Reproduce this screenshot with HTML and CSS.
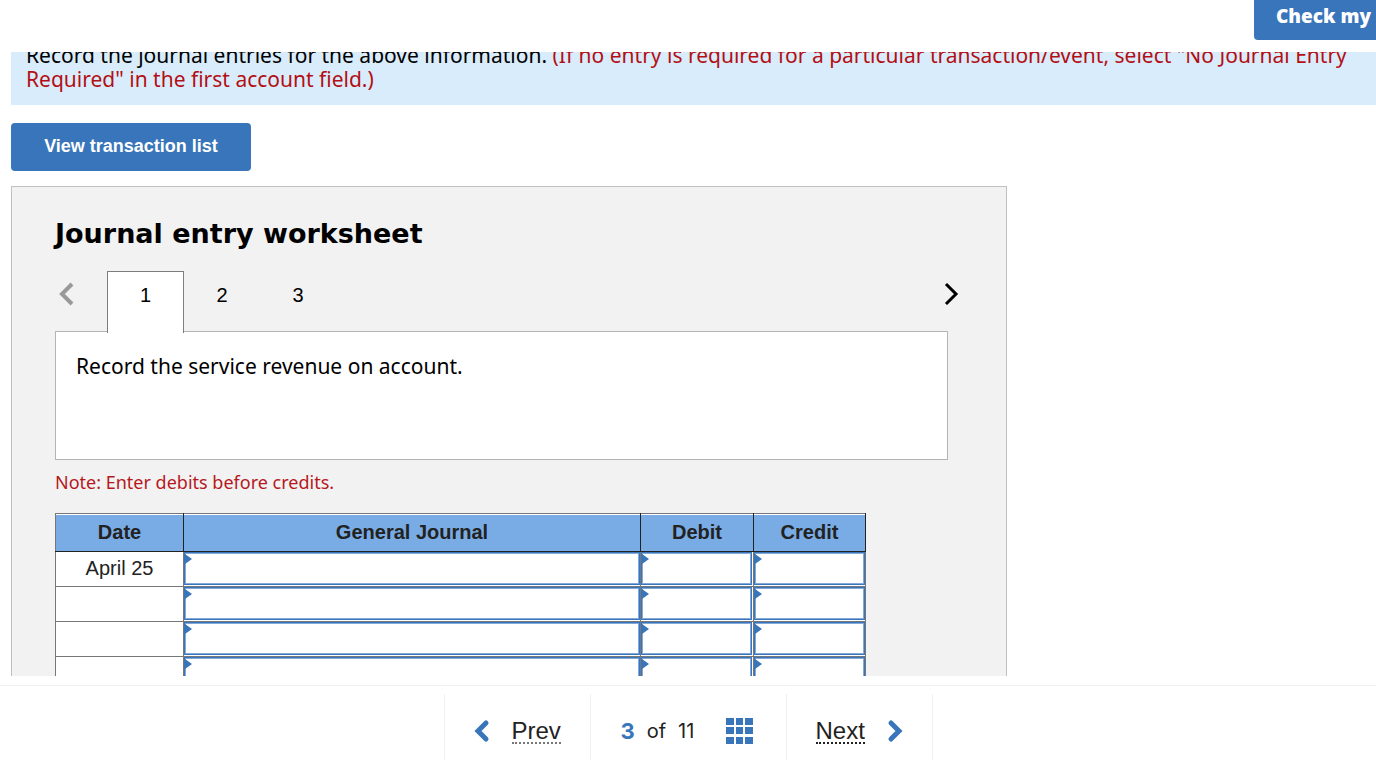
FILE: index.html
```html
<!DOCTYPE html>
<html lang="en">
<head>
    <meta charset="utf-8">
    <title>Journal entry worksheet</title>
    <link rel="stylesheet" href="styles.css">
</head>
<body>
    <header class="top-bar">
        <button type="button" class="check-button">Check my</button>
    </header>

    <main class="question">
        <p class="instructions">
            Record the journal entries for the above information.
            <span>(If no entry is required for a particular transaction/event, select "No Journal Entry Required" in the first account field.)</span>
        </p>
        <button type="button" class="list-button">View transaction list</button>

        <section class="worksheet">
            <h1>Journal entry worksheet</h1>
            <div class="tabs">
                <button type="button" class="arrow" aria-label="Previous entry" disabled>
                    <svg width="24" height="24" viewBox="0 0 24 24"><path d="M17 2 L7 12 L17 22"/></svg>
                </button>
                <button type="button" class="tab active">1</button>
                <button type="button" class="tab">2</button>
                <button type="button" class="tab">3</button>
                <button type="button" class="arrow next" aria-label="Next entry">
                    <svg width="24" height="24" viewBox="0 0 24 24"><path d="M10 2 L20 12 L10 22"/></svg>
                </button>
            </div>
            <div class="description">Record the service revenue on account.</div>
            <p class="note">Note: Enter debits before credits.</p>

            <table class="journal">
                <thead>
                    <tr>
                        <th class="date">Date</th>
                        <th>General Journal</th>
                        <th class="debit">Debit</th>
                        <th class="credit">Credit</th>
                    </tr>
                </thead>
                <tbody>
                    <tr>
                        <td>April 25</td>
                        <td class="entry"><input type="text" aria-label="Account 1"></td>
                        <td class="entry"><input type="text" aria-label="Debit 1"></td>
                        <td class="entry"><input type="text" aria-label="Credit 1"></td>
                    </tr>
                    <tr>
                        <td></td>
                        <td class="entry"><input type="text" aria-label="Account 2"></td>
                        <td class="entry"><input type="text" aria-label="Debit 2"></td>
                        <td class="entry"><input type="text" aria-label="Credit 2"></td>
                    </tr>
                    <tr>
                        <td></td>
                        <td class="entry"><input type="text" aria-label="Account 3"></td>
                        <td class="entry"><input type="text" aria-label="Debit 3"></td>
                        <td class="entry"><input type="text" aria-label="Credit 3"></td>
                    </tr>
                    <tr>
                        <td></td>
                        <td class="entry"><input type="text" aria-label="Account 4"></td>
                        <td class="entry"><input type="text" aria-label="Debit 4"></td>
                        <td class="entry"><input type="text" aria-label="Credit 4"></td>
                    </tr>
                </tbody>
            </table>
        </section>
    </main>

    <footer class="pager">
        <a href="#prev" class="step prev">
            <svg width="16" height="24" viewBox="0 0 16 24"><path d="M12 4 L4 12 L12 20"/></svg>
            <span>Prev</span>
        </a>
        <div class="position">
            <b>3</b>
            <span>of</span>
            <span class="total">11</span>
            <button type="button" class="grid-button" aria-label="All questions">
                <svg width="27" height="26" viewBox="0 0 27 26">
                    <path d="M0 0h8v7h-8z M10 0h7v7h-7z M19 0h8v7h-8z M0 9h8v7h-8z M10 9h7v7h-7z M19 9h8v7h-8z M0 19h8v7h-8z M10 19h7v7h-7z M19 19h8v7h-8z"/>
                </svg>
            </button>
        </div>
        <a href="#next" class="step next">
            <span>Next</span>
            <svg width="16" height="24" viewBox="0 0 16 24"><path d="M4 4 L12 12 L4 20"/></svg>
        </a>
    </footer>
</body>
</html>
```

FILE: styles.css
```css
* {
    box-sizing: border-box;
}
body {
    margin: 0;
    height: 100vh;
    display: flex;
    flex-direction: column;
    overflow: hidden;
    background: #fff;
    color: #000;
    font-family: "Noto Sans", Verdana, sans-serif;
    font-size: 21px;
}
button {
    border: none;
    padding: 0;
    background: none;
    cursor: pointer;
}

/* top bar */
.top-bar {
    display: flex;
    flex: none;
    justify-content: flex-end;
    height: 52px;
}
.check-button {
    height: 40px;
    padding: 0 5px 8px 22px;
    border-radius: 0 0 0 4px;
    background: #3975ba;
    color: #fff;
    font: 800 19px "Open Sans", sans-serif;
    white-space: nowrap;
}

/* question */
.question {
    flex: 1;
    min-height: 0;
    overflow: hidden;
    padding-left: 11px;
}
.instructions {
    margin: -23px 0 18px;
    padding: 14px 15px;
    background: #d9ecfb;
    line-height: 24px;
}
.instructions span {
    color: #b30f14;
}
.list-button {
    display: block;
    width: 240px;
    height: 48px;
    padding-bottom: 2px;
    border-radius: 4px;
    background: #3975ba;
    color: #fff;
    font: bold 18px "Liberation Sans", Arial, sans-serif;
}
.worksheet {
    max-width: 996px;
    margin-top: 15px;
    padding: 30px 46px 30px 43px;
    border: 1px solid #c0c0c0;
    background: #f2f2f2;
}
.worksheet h1 {
    margin: 0 0 20px;
    font-family: Verdana, "DejaVu Sans", sans-serif;
    font-size: 27px;
    line-height: 34px;
}
.tabs {
    display: flex;
    position: relative;
    height: 62px;
    margin-bottom: -2px;
}
.tab {
    width: 76px;
    padding-bottom: 14px;
    font: 20px "Liberation Sans", Arial, sans-serif;
}
.tab.active {
    width: 77px;
    border: 1px solid #7d7d7d;
    border-bottom: none;
    background: #fff;
}
.arrow {
    width: 52px;
    padding-bottom: 16px;
    text-align: left;
}
.arrow svg {
    display: block;
    fill: none;
    stroke: #999;
    stroke-width: 4;
}
.arrow.next {
    width: 24px;
    margin-left: auto;
}
.arrow.next svg {
    stroke: #000;
    stroke-width: 3;
}
.description {
    height: 129px;
    margin-right: 12px;
    padding: 22px 20px;
    border: 1px solid #b4b4b4;
    background: #fff;
    line-height: 24px;
}
.note {
    margin: 12px 0 21px;
    color: #b5191e;
    font-size: 18px;
    line-height: 20px;
}

/* journal table */
.journal {
    width: 811px;
    max-width: 100%;
    table-layout: fixed;
    border-collapse: collapse;
    background: #fff;
    color: #222;
    font: 20px "Liberation Sans", Arial, sans-serif;
    text-align: center;
}
.journal th {
    height: 38px;
    padding: 0;
    border: 1px solid #222;
    border-top-color: #777;
    background: #79ace5;
    box-shadow: inset 0 1px #fff;
}
.journal th:first-child {
    border-left-color: #777;
}
.journal .date {
    width: 128px;
}
.journal .debit {
    width: 113px;
}
.journal .credit {
    width: 112px;
}
.journal td {
    height: 35px;
    padding: 0 0 1px;
    border: 1px solid #777;
}
.journal tbody tr:first-child td {
    border-top-color: #222;
}
.journal .entry {
    position: relative;
}
.journal .entry:nth-child(3) {
    padding-right: 1px;
}
.entry input {
    display: block;
    width: 100%;
    height: 33px;
    padding: 0 10px;
    border: 1px solid #3975ba;
    border-radius: 0;
    box-shadow: inset 0 0 0 1px #82a9d8;
    font: inherit;
}
.entry::before {
    content: "";
    position: absolute;
    top: 2px;
    left: 1px;
    border: 5px solid transparent;
    border-left: 7px solid #3975ba;
    border-right: none;
}

/* pager */
.pager {
    display: flex;
    flex: none;
    justify-content: center;
    height: 78px;
    margin-top: 9px;
    padding: 8px 0 3px;
    border-top: 1px solid #f0f0f0;
    color: #222;
}
.step, .position {
    display: flex;
    align-items: center;
    padding-top: 7px;
    border-left: 1px solid #f0f0f0;
}
.step {
    width: 146px;
    color: #222;
    font: 24px "Liberation Sans", Arial, sans-serif;
    text-decoration: none;
}
.step span {
    margin-top: 2px;
    border-bottom: 2px dotted #222;
    line-height: 22px;
}
.step.prev {
    gap: 22px;
    padding-left: 29px;
}
.step.prev span {
    border-bottom-color: #777;
}
.step.next {
    width: 147px;
    gap: 22px;
    padding-left: 29px;
    border-right: 1px solid #f0f0f0;
}
.step svg {
    fill: none;
    stroke: #3975ba;
    stroke-width: 5;
    stroke-linecap: round;
}
.position {
    width: 196px;
    padding-left: 30px;
    gap: 12px;
    font: 20px Inter, sans-serif;
}
.position b {
    color: #3975ba;
    font-size: 22px;
}
.grid-button {
    margin-left: 20px;
}
.grid-button svg {
    display: block;
    fill: #3975ba;
}
```
